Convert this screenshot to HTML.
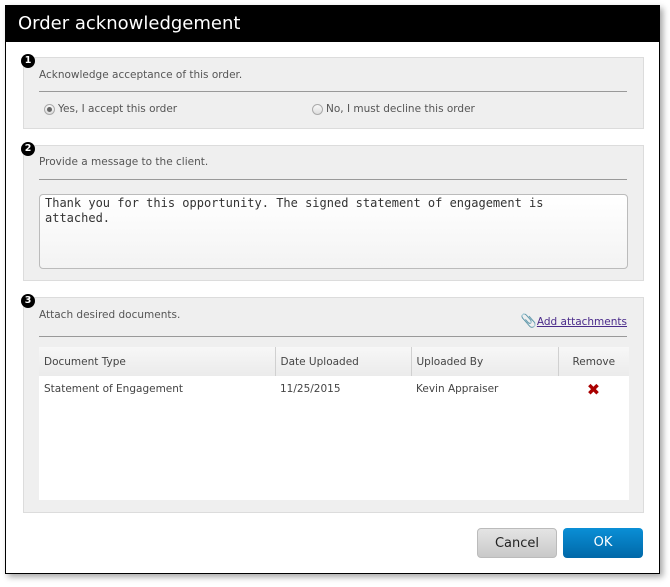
<!DOCTYPE html>
<html><head><style>
*{margin:0;padding:0;box-sizing:border-box}
body{width:670px;height:587px;background:#fff;position:relative;font-family:"DejaVu Sans",Verdana,sans-serif;overflow:hidden}
.dlg{position:absolute;left:5px;top:5px;width:655px;height:569px;border:1px solid #000;background:#fff;box-shadow:3px 3px 6px rgba(0,0,0,.35)}
.hd{position:absolute;left:0;top:0;width:653px;height:36px;background:#000;color:#fff;font-size:18px;padding:7px 0 0 12px}
.ab{position:absolute}
.panel{position:absolute;left:17px;width:621px;background:#efefef;border:1px solid #dcdcdc}
.lbl{position:absolute;left:15px;font-size:10.5px;color:#555;white-space:nowrap}
.rule{position:absolute;left:15px;width:588px;height:1px;background:#999}
.badge{position:absolute;width:14px;height:14px;border-radius:50%;background:#000;color:#fff;font-size:9.5px;font-weight:bold;text-align:center;line-height:14px}
.radio{position:absolute;width:11px;height:11px;border-radius:50%;border:1px solid #aaa;background:linear-gradient(#f8f8f8,#ddd)}
.radio.on::after{content:"";position:absolute;left:2px;top:2px;width:5px;height:5px;border-radius:50%;background:#666}
.ta{position:absolute;left:15px;top:48px;width:589px;height:75px;border:1px solid #bbb;border-radius:4px;background:linear-gradient(#fff,#f3f3f3);font-family:"DejaVu Sans Mono","Liberation Mono",monospace;font-size:12px;line-height:15px;color:#333;padding:1px 5px;white-space:nowrap}
table{position:absolute;left:15px;top:49px;width:590px;border-collapse:collapse;font-size:10.5px;color:#444}
th{font-weight:normal;text-align:left;height:29px;background:linear-gradient(#f7f7f7,#ebebeb);padding-left:5px;border-right:1px solid #d0d0d0}
td{height:26px;padding-left:5px;background:#fff}
.btn{position:absolute;top:522px;width:80px;height:30px;border-radius:4px;font-size:13px;text-align:center;line-height:29px}
</style></head><body>
<div class="dlg">
<div class="hd">Order acknowledgement</div>

<div class="panel" style="top:51px;height:72px">
<div class="lbl" style="top:11px">Acknowledge acceptance of this order.</div>
<div class="rule" style="top:33px"></div>
<div class="radio on" style="left:20px;top:46px"></div>
<div class="lbl" style="left:34px;top:45px">Yes, I accept this order</div>
<div class="radio" style="left:288px;top:46px"></div>
<div class="lbl" style="left:302px;top:45px">No, I must decline this order</div>
</div>
<div class="badge" style="left:15px;top:48px">1</div>

<div class="panel" style="top:139px;height:136px">
<div class="lbl" style="top:10px">Provide a message to the client.</div>
<div class="rule" style="top:33px"></div>
<div class="ta">Thank you for this opportunity. The signed statement of engagement is<br>attached.</div>
</div>
<div class="badge" style="left:15px;top:136px">2</div>

<div class="panel" style="top:291px;height:216px">
<div class="lbl" style="top:11px">Attach desired documents.</div>
<div class="ab" style="right:16px;top:16px;font-size:10.5px;color:#4a2a8a;text-decoration:underline;white-space:nowrap"><span style="color:#1a8ad4;display:inline-block;font-size:13px">&#128206;</span>Add attachments</div>
<div class="rule" style="top:38px"></div>
<table>
<tr><th style="width:236px">Document Type</th><th style="width:136px">Date Uploaded</th><th style="width:147px">Uploaded By</th><th style="border:none;text-align:center;padding:0">Remove</th></tr>
<tr><td>Statement of Engagement</td><td>11/25/2015</td><td>Kevin Appraiser</td><td style="text-align:center;padding:0;color:#a00;font-size:16px;font-weight:bold">&#10006;</td></tr>
<tr><td colspan="4" style="height:98px"></td></tr>
</table>
</div>
<div class="badge" style="left:15px;top:288px">3</div>

<div class="btn" style="left:471px;background:linear-gradient(#e4e4e4,#c9c9c9);border:1px solid #bbb;color:#222">Cancel</div>
<div class="btn" style="left:557px;background:linear-gradient(#0a8fd6,#0068a8);color:#fff">OK</div>
</div>
</body></html>
